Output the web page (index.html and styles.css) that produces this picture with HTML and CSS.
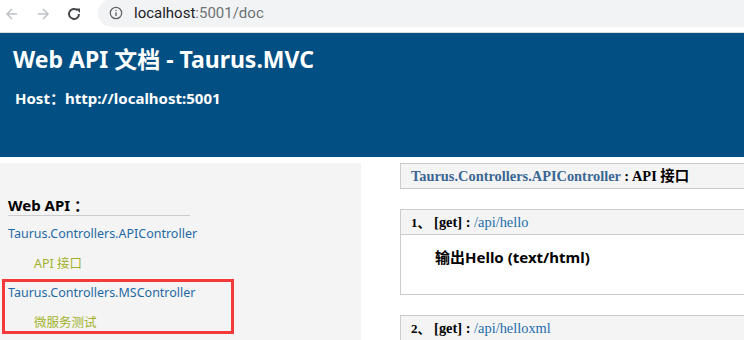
FILE: index.html
```html
<!DOCTYPE html>
<html lang="zh-CN">
<head>
    <meta charset="UTF-8">
    <title>Web API 文档 - Taurus.MVC</title>
    <link rel="stylesheet" href="styles.css">
</head>
<body>

    <div class="chrome">
        <div class="nav-btns">
            <svg class="nav-icon dim" viewBox="0 0 16 16" width="16" height="16"><path d="M13 8H3.5M8 3L3 8l5 5" fill="none" stroke="currentColor" stroke-width="1.5"/></svg>
            <svg class="nav-icon dim" viewBox="0 0 16 16" width="16" height="16"><path d="M3 8h9.5M8 3l5 5-5 5" fill="none" stroke="currentColor" stroke-width="1.5"/></svg>
            <svg class="nav-icon" viewBox="0 0 16 16" width="16" height="16"><path d="M13 8a5 5 0 1 1-1.6-3.7" fill="none" stroke="currentColor" stroke-width="2"/><path d="M9.5 2.5h4.5V7z" fill="currentColor"/></svg>
        </div>
        <div class="omnibox">
            <svg class="info-icon" viewBox="0 0 16 16" width="14" height="14"><circle cx="8" cy="8" r="6.5" fill="none" stroke="currentColor" stroke-width="1.4"/><path d="M8 7v4.5M8 4.5v1.3" stroke="currentColor" stroke-width="1.5"/></svg>
            <span class="url"><span class="host">localhost</span>:5001/doc</span>
        </div>
    </div>

    <div class="header">
        <h1>Web API 文档 - Taurus.MVC</h1>
        <p class="host-line">Host：http://localhost:5001</p>
    </div>

    <div class="page">
        <div class="sidebar">
            <h3>Web API ：</h3>
            <ul class="ctl-list">
                <li class="ctl">Taurus.Controllers.APIController</li>
                <li class="ctl-desc">API 接口</li>
            </ul>
            <ul class="ctl-list marked">
                <li class="ctl">Taurus.Controllers.MSController</li>
                <li class="ctl-desc">微服务测试</li>
            </ul>
        </div>

        <div class="main">
            <div class="ctl-title">
                <span class="ctl-name">Taurus.Controllers.APIController</span> : API 接口
            </div>

            <div class="api-box">
                <div class="api-head">
                    <span class="num">1、</span> [get] : <span class="path">/api/hello</span>
                </div>
                <div class="api-body">输出Hello (text/html)</div>
            </div>

            <div class="api-box">
                <div class="api-head">
                    <span class="num">2、</span> [get] : <span class="path">/api/helloxml</span>
                </div>
            </div>
        </div>
    </div>

</body>
</html>
```

FILE: styles.css
```css
body {
    margin: 0;
    padding: 0;
    font-family: 'Noto Sans', 'Noto Sans CJK SC', sans-serif;
    background-color: #fff;
    overflow: hidden;
}
.chrome {
    display: flex;
    align-items: center;
    height: 28px;
    padding-bottom: 4px;
    border-bottom: 1px solid #dadce0;
    background-color: #fff;
}
.nav-btns {
    display: flex;
    gap: 15px;
    padding-left: 4px;
    width: 94px;
}
.nav-icon {
    color: #474a4d;
}
.nav-icon.dim {
    color: #bdc1c6;
}
.omnibox {
    flex: 1;
    display: flex;
    align-items: center;
    height: 28px;
    margin-top: -2px;
    background-color: #f1f3f4;
    border-radius: 14px 0 0 14px;
    padding-left: 11px;
}
.info-icon {
    color: #5f6368;
    margin-right: 11px;
}
.url {
    font-family: 'Roboto', sans-serif;
    font-size: 15px;
    color: #6e7276;
}
.url .host {
    color: #202124;
}
.header {
    background-color: #024f83;
    height: 124px;
    padding: 0 13px;
    color: #fff;
}
.header h1 {
    margin: 0;
    padding-top: 10px;
    font-size: 23px;
    line-height: 32px;
}
.header .host-line {
    margin: 12px 0 0 2px;
    font-size: 15px;
    font-weight: bold;
}
.page {
    display: flex;
    margin-top: 6px;
}
.sidebar {
    flex: 0 0 361px;
    height: 180px;
    background-color: #f4f4f4;
    padding: 0 8px;
    box-sizing: border-box;
}
.sidebar h3 {
    width: 182px;
    margin: 32px 0 0;
    font-size: 15px;
    line-height: 20px;
    border-bottom: 1px solid #ccc;
    color: #000;
}
.ctl-list {
    list-style: none;
    margin: 3px 0 0;
    padding: 0;
    font-size: 12.5px;
}
.ctl-list li {
    line-height: 30px;
    white-space: nowrap;
}
.ctl {
    color: #1f69a6;
}
.ctl-desc {
    padding-left: 26px;
    color: #a2b228;
}
.ctl-list.marked {
    margin: 0 0 0 -6px;
    width: 223px;
    padding-left: 3px;
    border: 3px solid #f4393b;
}
.ctl-list.marked li {
    line-height: 22px;
}
.ctl-list.marked .ctl-desc {
    height: 19px;
    padding-top: 8px;
}
.main {
    flex: 0 0 auto;
    width: 420px;
    padding-left: 39px;
    font-family: 'Liberation Serif', 'Noto Sans CJK SC', serif;
    font-size: 14.4px;
    font-weight: bold;
}
.ctl-title {
    height: 24px;
    line-height: 24px;
    padding-left: 10px;
    border: 1px solid #ccc;
    background-color: #f4f4f4;
}
.ctl-name {
    color: #3a6693;
}
.api-box {
    margin-top: 20px;
    border: 1px solid #ccc;
}
.api-head {
    height: 24px;
    line-height: 24px;
    padding-left: 10px;
    background-color: #f4f4f4;
    border-bottom: 1px solid #ccc;
}
.api-head .num {
    font-size: 13px;
}
.api-head .path {
    color: #1d6cab;
    font-weight: normal;
}
.api-body {
    height: 59px;
    padding-left: 34px;
    padding-top: 2px;
    box-sizing: border-box;
    line-height: 40px;
    font-family: 'Noto Sans', 'Noto Sans CJK SC', sans-serif;
    font-size: 15px;
}
```
